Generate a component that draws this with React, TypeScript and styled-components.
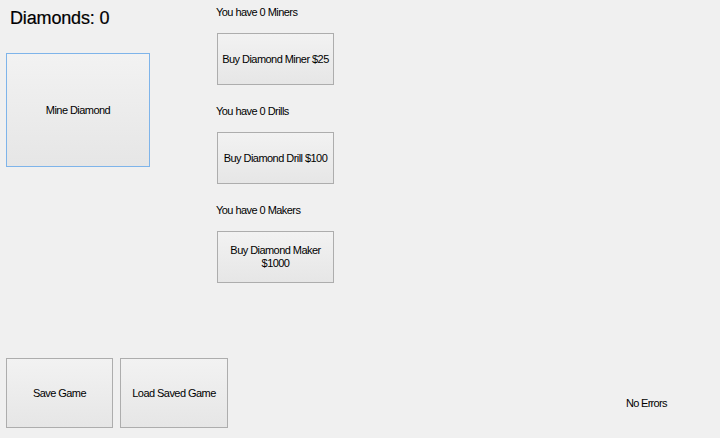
import styled, { createGlobalStyle } from 'styled-components';

const GlobalStyle = createGlobalStyle`
  html, body {
    margin: 0;
    padding: 0;
    background: #f0f0f0;
  }
  * {
    box-sizing: border-box;
  }
`;

const upgrades = [
  { label: 'You have 0 Miners', button: 'Buy Diamond Miner $25' },
  { label: 'You have 0 Drills', button: 'Buy Diamond Drill $100' },
  { label: 'You have 0 Makers', button: 'Buy Diamond Maker $1000' },
];

export default function App() {
  return (
    <>
      <GlobalStyle />
      <S.Form>
        <S.Top>
          <S.LeftColumn>
            <S.Title>Diamonds: 0</S.Title>
            <S.FormButton $width={144} $height={114} $focused>
              Mine Diamond
            </S.FormButton>
          </S.LeftColumn>
          <S.ShopColumn>
            {upgrades.map((u) => (
              <S.ShopGroup key={u.label}>
                <S.Label>{u.label}</S.Label>
                <S.ShopButton $width={117} $height={52}>
                  <S.ButtonText>{u.button}</S.ButtonText>
                </S.ShopButton>
              </S.ShopGroup>
            ))}
          </S.ShopColumn>
        </S.Top>
        <S.Bottom>
          <S.FormButton $width={107} $height={70}>
            Save Game
          </S.FormButton>
          <S.FormButton $width={108} $height={70}>
            Load Saved Game
          </S.FormButton>
          <S.Status>No Errors</S.Status>
        </S.Bottom>
      </S.Form>
    </>
  );
}

const FormButton = styled.button<{ $width: number; $height: number; $focused?: boolean }>`
  width: ${(p) => p.$width}px;
  height: ${(p) => p.$height}px;
  margin: 0;
  padding: 2px 2px;
  border: 1px solid ${(p) => (p.$focused ? '#7eb4ea' : '#adadad')};
  border-radius: 0;
  background: linear-gradient(#f2f2f2, #e6e6e6);
  font-family: 'Liberation Sans', Arial, sans-serif;
  font-size: 11px;
  line-height: 13px;
  letter-spacing: -0.55px;
  color: #000;
  display: flex;
  align-items: center;
  justify-content: center;
  text-align: center;
  cursor: default;
`;

const S = {
  Form: styled.div`
    width: 720px;
    height: 438px;
    display: flex;
    flex-direction: column;
    background: #f0f0f0;
    color: #000;
    font-family: 'Liberation Sans', Arial, sans-serif;
    overflow: hidden;
  `,
  Top: styled.div`
    display: flex;
  `,
  LeftColumn: styled.div`
    width: 216px;
    padding: 7px 0 0 6px;
    display: flex;
    flex-direction: column;
    gap: 24px;
  `,
  Title: styled.div`
    font-size: 18px;
    line-height: 22px;
    padding-left: 4px;
    letter-spacing: -0.15px;
    -webkit-text-stroke: 0.2px #000;
  `,
  ShopColumn: styled.div`
    padding-top: 6px;
    display: flex;
    flex-direction: column;
    gap: 20px;
  `,
  ShopGroup: styled.div`
    display: flex;
    flex-direction: column;
    gap: 14px;
  `,
  Label: styled.div`
    font-size: 11px;
    line-height: 13px;
    letter-spacing: -0.55px;
  `,
  FormButton,
  ShopButton: styled(FormButton)`
    margin-left: 1px;
  `,
  ButtonText: styled.span`
    display: block;
    max-width: 111px;
  `,
  Bottom: styled.div`
    margin-top: auto;
    padding: 0 0 10px 6px;
    display: flex;
    align-items: flex-end;
    gap: 7px;
  `,
  Status: styled.div`
    margin: 0 0 18px 391px;
    font-size: 11px;
    line-height: 13px;
    letter-spacing: -0.7px;
  `,
};
